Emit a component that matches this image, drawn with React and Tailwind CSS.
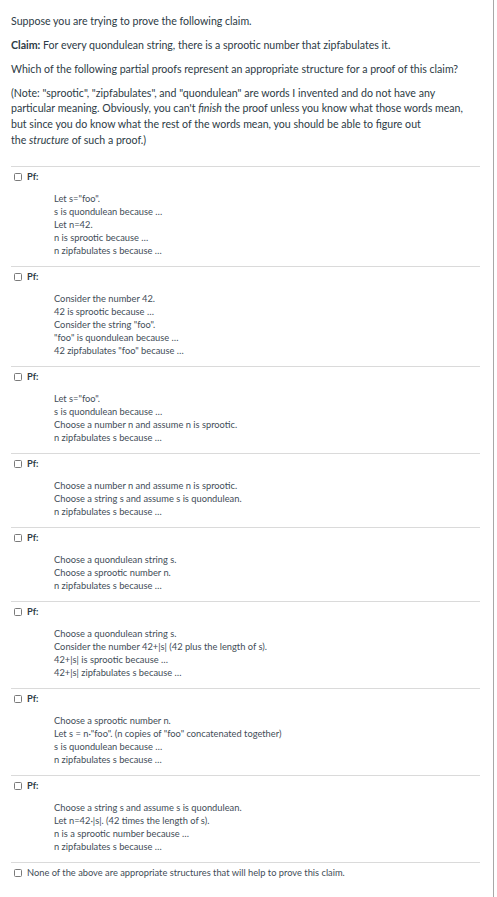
import React from 'react';

const PROOFS = [
  ['Let s="foo".', 's is quondulean because …', 'Let n=42.', 'n is sprootic because …', 'n zipfabulates s because …'],
  ['Consider the number 42.', '42 is sprootic because …', 'Consider the string "foo".', '"foo" is quondulean because …', '42 zipfabulates "foo" because …'],
  ['Let s="foo".', 's is quondulean because …', 'Choose a number n and assume n is sprootic.', 'n zipfabulates s because …'],
  ['Choose a number n and assume n is sprootic.', 'Choose a string s and assume s is quondulean.', 'n zipfabulates s because …'],
  ['Choose a quondulean string s.', 'Choose a sprootic number n.', 'n zipfabulates s because …'],
  ['Choose a quondulean string s.', 'Consider the number 42+|s| (42 plus the length of s).', '42+|s| is sprootic because …', '42+|s| zipfabulates s because …'],
  ['Choose a sprootic number n.', 'Let s = n·"foo". (n copies of "foo" concatenated together)', 's is quondulean because …', 'n zipfabulates s because …'],
  ['Choose a string s and assume s is quondulean.', 'Let n=42·|s|. (42 times the length of s).', 'n is a sprootic number because …', 'n zipfabulates s because …'],
];

const Box = () => (
  <span className="block w-[8px] h-[8px] border border-[#7a7a7a] rounded-[1.5px] bg-white shrink-0" />
);

const Option = ({ lines }) => (
  <div className="border-t border-[#dadada] pt-[3px] pb-[9px]">
    <div className="h-[14px] flex items-center pl-[3px] gap-[5px]">
      <Box />
      <span className="font-bold text-[9.3px]">Pf:</span>
    </div>
    <div className="mt-[8px] pl-[43px] text-[9.3px] leading-[13px] text-[#3f4d57]">
      {lines.map((l, i) => (
        <div key={i} className="whitespace-nowrap">{l}</div>
      ))}
    </div>
  </div>
);

export default function App() {
  return (
    <div className="w-[497px] min-h-[897px] bg-white flex font-['Lato','Open_Sans',sans-serif] text-[#2d3b45]">
      <div className="w-[494px] min-h-[897px] border-r border-[#a8a8a8] pl-[11px] pr-[13px] pt-[14px]">
        <div className="text-[10.6px] leading-[15.8px]">
          <p>Suppose you are trying to prove the following claim.</p>
          <p className="mt-[8px]"><span className="font-bold">Claim:</span> For every quondulean string, there is a sprootic number that zipfabulates it.</p>
          <p className="mt-[8.5px] whitespace-nowrap">Which of the following partial proofs represent an appropriate structure for a proof of this claim?</p>
          <p className="mt-[7.8px] whitespace-nowrap">
            (Note: "sprootic", "zipfabulates", and "quondulean" are words I invented and do not have any<br />
            particular meaning. Obviously, you can't <em>finish</em> the proof unless you know what those words mean,<br />
            but since you do know what the rest of the words mean, you should be able to figure out<br />
            the <em>structure</em> of such a proof.)
          </p>
        </div>
        <div className="mt-[17px]">
          {PROOFS.map((p, i) => (
            <Option key={i} lines={p} />
          ))}
          <div className="border-t border-[#dadada] pt-[3px]">
            <div className="h-[14px] flex items-center pl-[3px] gap-[5px]">
              <Box />
              <span className="text-[9.3px] text-[#3f4d57]">None of the above are appropriate structures that will help to prove this claim.</span>
            </div>
          </div>
        </div>
      </div>
    </div>
  );
}
